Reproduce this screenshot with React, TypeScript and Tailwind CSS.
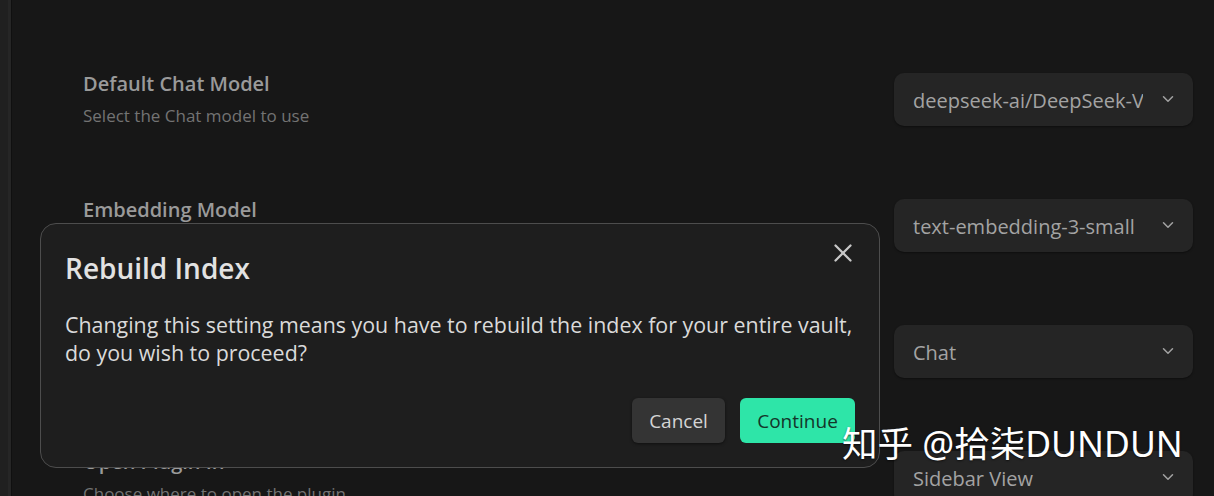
import React from 'react';
import { ChevronDown, X } from 'lucide-react';

const ui = { fontFamily: '"Open Sans", "Noto Sans", sans-serif' };

type Row = { title: string; desc: string; value: string };

const rows: Row[] = [
  { title: 'Default Chat Model', desc: 'Select the Chat model to use', value: 'deepseek-ai/DeepSeek-V3' },
  { title: 'Embedding Model', desc: 'Select the embedding model to use', value: 'text-embedding-3-small' },
  { title: 'Default Mode', desc: 'Select the default chat mode', value: 'Chat' },
  { title: 'Open Plugin In', desc: 'Choose where to open the plugin', value: 'Sidebar View' },
];

const Select: React.FC<{ value: string }> = ({ value }) => (
  <div className="flex items-center w-[299px] h-[53px] rounded-[10px] bg-[#252525] pl-[19px] pr-[16px] shadow-[0_1px_2px_rgba(0,0,0,0.4)]">
    <span className="flex-1 overflow-hidden whitespace-nowrap pt-[4px] text-[20px] text-[#a3a3a3]">{value}</span>
    <ChevronDown size={18} strokeWidth={2} className="ml-[16px] shrink-0 text-[#a3a3a3]" />
  </div>
);

export default function App() {
  return (
    <div className="relative flex w-[1214px] h-[496px] overflow-hidden bg-[#171717]" style={ui}>
      {/* sidebar edge */}
      <div className="w-[8px] shrink-0 bg-[#202020]" />
      <div className="w-[3px] shrink-0 bg-[#262626]" />
      <div className="w-[1px] shrink-0 bg-[#101010]" />

      <div className="flex-1 pl-[71px] pr-[21px]">
        <div className="mt-[-90px] flex flex-col">
          <div className="flex h-[126px] items-center justify-end">
            <div className="w-[155px] h-[53px] mr-[3px] rounded-[8px] bg-[#202020] border border-[#2a2a2a]" />
          </div>
          {rows.map((r) => (
            <div key={r.title} className="flex h-[126px] items-center justify-between">
              <div className="flex flex-col">
                <span className="text-[20px] leading-[28px] font-semibold text-[#9a9a9a]">{r.title}</span>
                <span className="mt-[6px] text-[17px] leading-[24px] text-[#737373]">{r.desc}</span>
              </div>
              <Select value={r.value} />
            </div>
          ))}
        </div>
      </div>

      {/* modal */}
      <div className="absolute left-[40px] top-[223px] w-[840px] h-[245px] rounded-[16px] border border-[#4d4d4d] bg-[#1e1e1e] pl-[24px] pr-[24px] pt-[25px] pb-[24px] flex flex-col">
        <button className="absolute right-[21px] top-[14px] text-[#c8c8c8]">
          <X size={30} strokeWidth={1.8} />
        </button>
        <h2 className="text-[28px] leading-[38px] font-semibold text-[#e2e2e2]">Rebuild Index</h2>
        <p className="mt-[24px] text-[21.4px] leading-[28px] text-[#dadada]">
          Changing this setting means you have to rebuild the index for your entire vault,
          <br />
          do you wish to proceed?
        </p>
        <div className="mt-auto flex justify-end gap-[15px]">
          <button className="w-[93px] h-[45px] rounded-[6px] bg-[#343434] pt-[2px] text-[19px] text-[#d4d4d4] shadow-[0_1px_3px_rgba(0,0,0,0.5)]">
            Cancel
          </button>
          <button className="w-[115px] h-[45px] rounded-[6px] bg-[#2ee5a8] pt-[2px] text-[19px] text-[#14352a]">
            Continue
          </button>
        </div>
      </div>

      {/* watermark */}
      <div
        className="absolute left-[842px] top-[419px] text-[35.5px] leading-[48px] text-white whitespace-nowrap [text-shadow:0_1px_2px_rgba(0,0,0,0.6)]"
        style={{ fontFamily: '"Noto Sans", "Noto Sans CJK SC", sans-serif' }}
      >
        知乎 @拾柒DUNDUN
      </div>
    </div>
  );
}
